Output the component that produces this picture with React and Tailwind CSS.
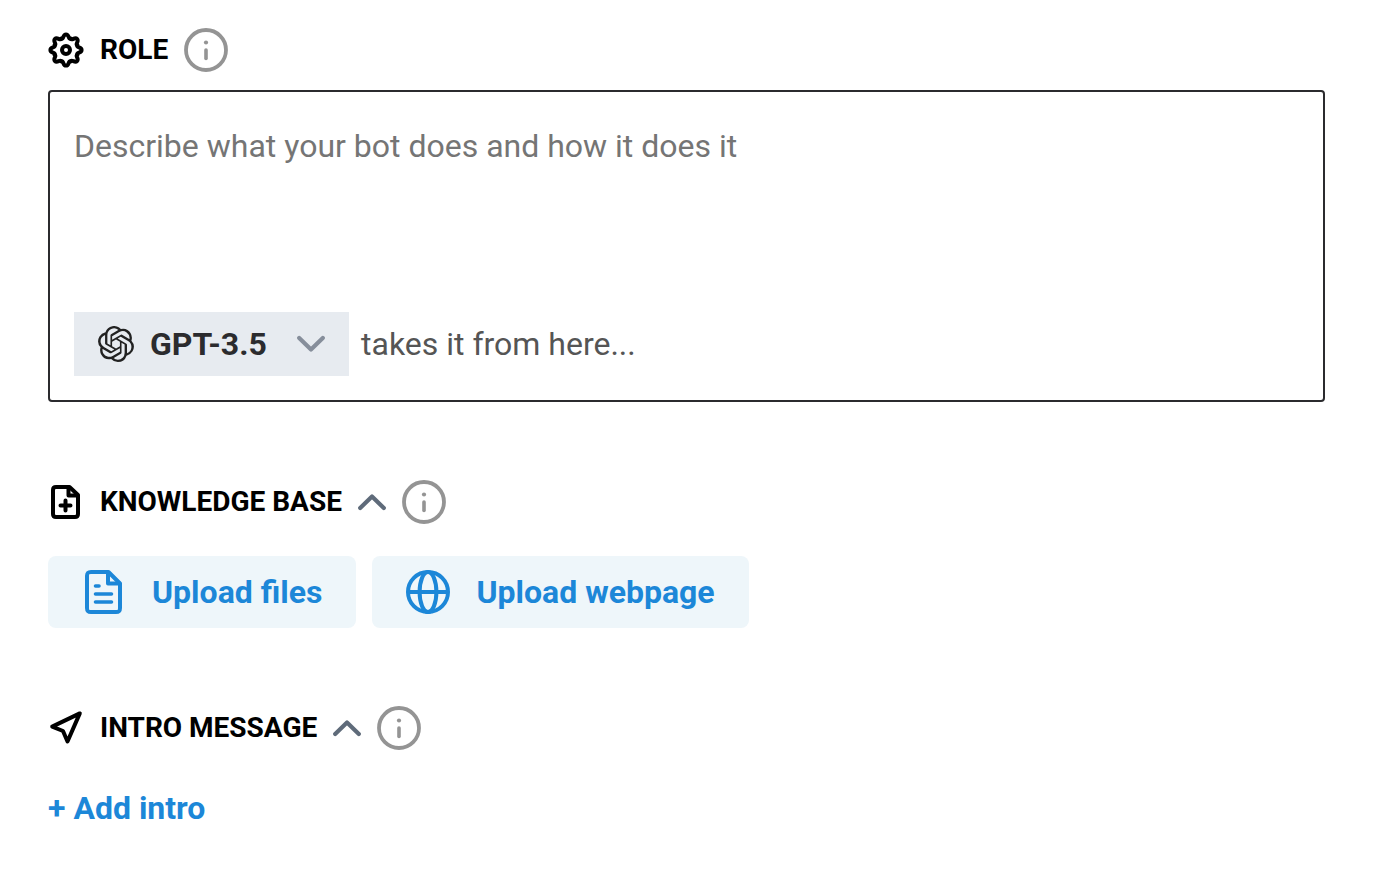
import { useState } from "react";
import { SiOpenai } from "react-icons/si";

const GEAR_TEETH = [0, 45, 90, 135, 180, 225, 270, 315];

function GearIcon() {
  return (
    <svg viewBox="0 0 36 36" className="w-9 h-9 shrink-0" fill="none" stroke="currentColor" strokeWidth="4" strokeLinejoin="round" strokeLinecap="round">
      {GEAR_TEETH.map((deg) => (
        <path
          key={deg}
          d="M13.3 6.7 C16 7.4 14.6 2.4 18 2.4 C21.4 2.4 20 7.4 22.7 6.7"
          transform={`rotate(${deg} 18 18)`}
        />
      ))}
      <circle cx="18" cy="18" r="4" />
    </svg>
  );
}

function FilePlusIcon() {
  return (
    <svg viewBox="0 0 36 36" className="w-9 h-9 shrink-0" fill="none" stroke="currentColor" strokeWidth="4" strokeLinejoin="round" strokeLinecap="round">
      <path d="M21.5 3 H8 C6.2 3 5 4.2 5 6 V30 C5 31.8 6.2 33 8 33 H27 C28.8 33 30 31.8 30 30 V11 Z" />
      <path d="M20.5 3.5 V11.5 H29.5" />
      <path d="M17.5 16.5 V26.5 M12.5 21.5 H22.5" />
    </svg>
  );
}

function SendIcon() {
  return (
    <svg viewBox="0 0 36 36" className="w-9 h-9 shrink-0" fill="none" stroke="currentColor" strokeWidth="4" strokeLinejoin="round" strokeLinecap="round">
      <path d="M31.8 3.4 L4.2 16.6 L15 21 L19.5 31.5 Z" />
    </svg>
  );
}

function FileTextIcon() {
  return (
    <svg viewBox="0 0 44 44" className="w-11 h-11 shrink-0" fill="none" stroke="currentColor" strokeWidth="4" strokeLinejoin="round" strokeLinecap="round">
      <path d="M26.5 2 H9 C6 2 5 3 5 6 V38 C5 41 6 42 9 42 H34 C37 42 38 41 38 38 V13.5 Z" />
      <path d="M26 2.5 V13.5 H37.5" />
      <path d="M13.5 16 H17 M13.5 24 H29.5 M13.5 32 H29.5" strokeWidth="3.6" />
    </svg>
  );
}

function GlobeIcon() {
  return (
    <svg viewBox="0 0 44 44" className="w-11 h-11 shrink-0" fill="none" stroke="currentColor" strokeWidth="4">
      <circle cx="22" cy="22" r="20" />
      <ellipse cx="22" cy="22" rx="8.4" ry="20" />
      <path d="M2 22 H42" />
    </svg>
  );
}

function Chevron({ className }) {
  return (
    <svg viewBox="0 0 28 18" className={className} fill="none" stroke="currentColor" strokeWidth="4.2" strokeLinejoin="round" strokeLinecap="round">
      <path d="M2.2 3 L14 14.5 L25.8 3" />
    </svg>
  );
}

function InfoButton({ label }) {
  return (
    <button type="button" aria-label={label} className="shrink-0 text-[#949494]">
      <svg viewBox="0 0 44 44" className="w-11 h-11" fill="none" stroke="currentColor">
        <circle cx="22" cy="22" r="20" strokeWidth="3.8" />
        <circle cx="22" cy="14.5" r="2.1" fill="currentColor" stroke="none" />
        <path d="M22 22 V30.5" strokeWidth="3.6" strokeLinecap="round" />
      </svg>
    </button>
  );
}

function SectionTitle({ icon, title, info, open, onToggle }) {
  return (
    <div className="flex items-center gap-4 h-11">
      {icon}
      <h2 className="text-[28px] leading-8 font-bold whitespace-nowrap">{title}</h2>
      {onToggle && (
        <button type="button" aria-label={`Toggle ${title}`} aria-expanded={open} onClick={onToggle} className="text-[#5f6b7a]">
          <Chevron className={open ? "w-7 h-[18px] rotate-180" : "w-7 h-[18px]"} />
        </button>
      )}
      <InfoButton label={info} />
    </div>
  );
}

function UploadButton({ icon, children }) {
  return (
    <button type="button" className="flex items-center gap-[26px] h-[72px] px-[34px] rounded-lg bg-[#eef6fa] text-[#1c87d8] text-[32px] leading-10 font-bold whitespace-nowrap">
      {icon}
      {children}
    </button>
  );
}

export default function App() {
  const [knowledgeOpen, setKnowledgeOpen] = useState(true);
  const [introOpen, setIntroOpen] = useState(true);

  return (
    <main className="bg-white text-black font-['Roboto',sans-serif] pt-7 pb-12 pl-12 pr-[75px]">
      <section>
        <SectionTitle icon={<GearIcon />} title="ROLE" info="About the role" />
        <div className="mt-[18px] border-2 border-[#2b2b2e] rounded-sm p-6">
          <textarea
            aria-label="Role"
            placeholder="Describe what your bot does and how it does it"
            className="block w-full h-[196px] pt-[10px] resize-none outline-none text-[32px] leading-10 text-[#2b2b2e] placeholder:text-[#757575]"
          />
          <div className="flex items-center gap-3">
            <div className="relative">
              <SiOpenai className="absolute left-6 top-[14px] w-9 h-9 text-[#222] pointer-events-none" />
              <select aria-label="Model" className="block appearance-none w-[275px] h-16 pl-[76px] pr-16 bg-[#e7ebf0] text-[#2b2b2e] text-[32px] leading-10 font-bold outline-none">
                <option>GPT-3.5</option>
                <option>GPT-4</option>
              </select>
              <Chevron className="absolute right-6 top-[23px] w-7 h-[18px] text-[#868e9b] pointer-events-none" />
            </div>
            <span className="text-[32px] leading-10 text-[#555]">takes it from here...</span>
          </div>
        </div>
      </section>

      <section className="mt-[78px]">
        <SectionTitle
          icon={<FilePlusIcon />}
          title="KNOWLEDGE BASE"
          info="About the knowledge base"
          open={knowledgeOpen}
          onToggle={() => setKnowledgeOpen(!knowledgeOpen)}
        />
        {knowledgeOpen && (
          <div className="flex flex-wrap gap-4 mt-8">
            <UploadButton icon={<FileTextIcon />}>Upload files</UploadButton>
            <UploadButton icon={<GlobeIcon />}>Upload webpage</UploadButton>
          </div>
        )}
      </section>

      <section className="mt-[78px]">
        <SectionTitle
          icon={<SendIcon />}
          title="INTRO MESSAGE"
          info="About the intro message"
          open={introOpen}
          onToggle={() => setIntroOpen(!introOpen)}
        />
        {introOpen && (
          <button type="button" className="block mt-[38px] text-[32px] leading-10 font-bold text-[#1c87d8]">
            + Add intro
          </button>
        )}
      </section>
    </main>
  );
}
